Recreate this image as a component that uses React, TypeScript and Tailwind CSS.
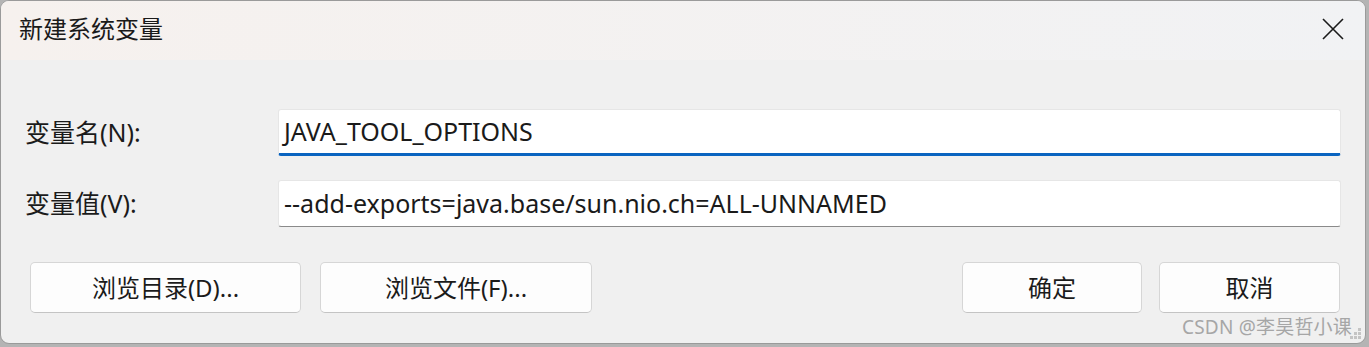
import React from "react";

const font = { fontFamily: '"Noto Sans", "Noto Sans CJK SC", sans-serif' };

function Field({ label, value, focused }: { label: string; value: string; focused?: boolean }) {
  return (
    <div className="flex items-center h-[47px]">
      <div className="w-[253px] shrink-0 text-[25px] text-[#1b1b1b] pt-[1px]">{label}</div>
      <div
        className={`flex-1 h-full bg-white border border-[#e6e6e6] rounded-[3px] flex items-center pl-[5px] text-[25px] text-[#1a1a1a] ${
          focused ? "border-b-[3px] border-b-[#0a64c0]" : "border-b-[#8a8a8a]"
        }`}
      >
        {value}
      </div>
    </div>
  );
}

function Btn({ children, className }: { children: React.ReactNode; className: string }) {
  return (
    <button
      className={`h-[51px] bg-[#fdfdfd] border border-[#d6d6d6] border-b-[#c4c4c4] rounded-[5px] text-[24px] text-[#1b1b1b] flex items-center justify-center ${className}`}
    >
      {children}
    </button>
  );
}

export default function App() {
  return (
    <div className="w-[1369px] h-[347px] bg-[#b4b4b4] overflow-hidden" style={font}>
      <div className="relative w-[1366px] h-[344px] bg-[#f0f0f0] border border-[#9a9a9a] rounded-[9px] overflow-hidden flex flex-col">
        {/* title bar */}
        <div className="h-[59px] shrink-0 bg-gradient-to-r from-[#f6f1ee] to-[#f1f2f4] flex items-center justify-between pl-[18px] pr-[21px]">
          <span className="text-[24px] text-[#1a1a1a] -mt-[3px]">新建系统变量</span>
          <svg width="22" height="22" viewBox="0 0 22 22" className="-mt-[3px]">
            <path d="M1 1 L21 21 M21 1 L1 21" stroke="#1a1a1a" strokeWidth="1.6" />
          </svg>
        </div>

        {/* fields */}
        <div className="flex flex-col gap-[24px] pl-[24px] pr-[24px] pt-[49px]">
          <Field label="变量名(N):" value="JAVA_TOOL_OPTIONS" focused />
          <Field label="变量值(V):" value="--add-exports=java.base/sun.nio.ch=ALL-UNNAMED" />
        </div>

        {/* buttons */}
        <div className="flex items-center pl-[29px] pr-[25px] pt-[35px]">
          <Btn className="w-[271px]">浏览目录(D)...</Btn>
          <Btn className="w-[272px] ml-[19px]">浏览文件(F)...</Btn>
          <div className="flex-1" />
          <Btn className="w-[180px]">确定</Btn>
          <Btn className="w-[181px] ml-[17px]">取消</Btn>
        </div>

        {/* watermark */}
        <div className="absolute right-[13px] bottom-[2px] text-[19px] text-[#a6a6a6] tracking-[0.2px]">
          CSDN @李昊哲小课
        </div>
        {/* resize grip */}
        <svg className="absolute right-[3px] bottom-[3px]" width="12" height="12" viewBox="0 0 12 12">
          <rect x="8" y="0" width="3" height="3" fill="#c4c4c4" />
          <rect x="4" y="4" width="3" height="3" fill="#c4c4c4" />
          <rect x="8" y="4" width="3" height="3" fill="#c4c4c4" />
          <rect x="0" y="8" width="3" height="3" fill="#c4c4c4" />
          <rect x="4" y="8" width="3" height="3" fill="#c4c4c4" />
          <rect x="8" y="8" width="3" height="3" fill="#c4c4c4" />
        </svg>
      </div>
    </div>
  );
}
